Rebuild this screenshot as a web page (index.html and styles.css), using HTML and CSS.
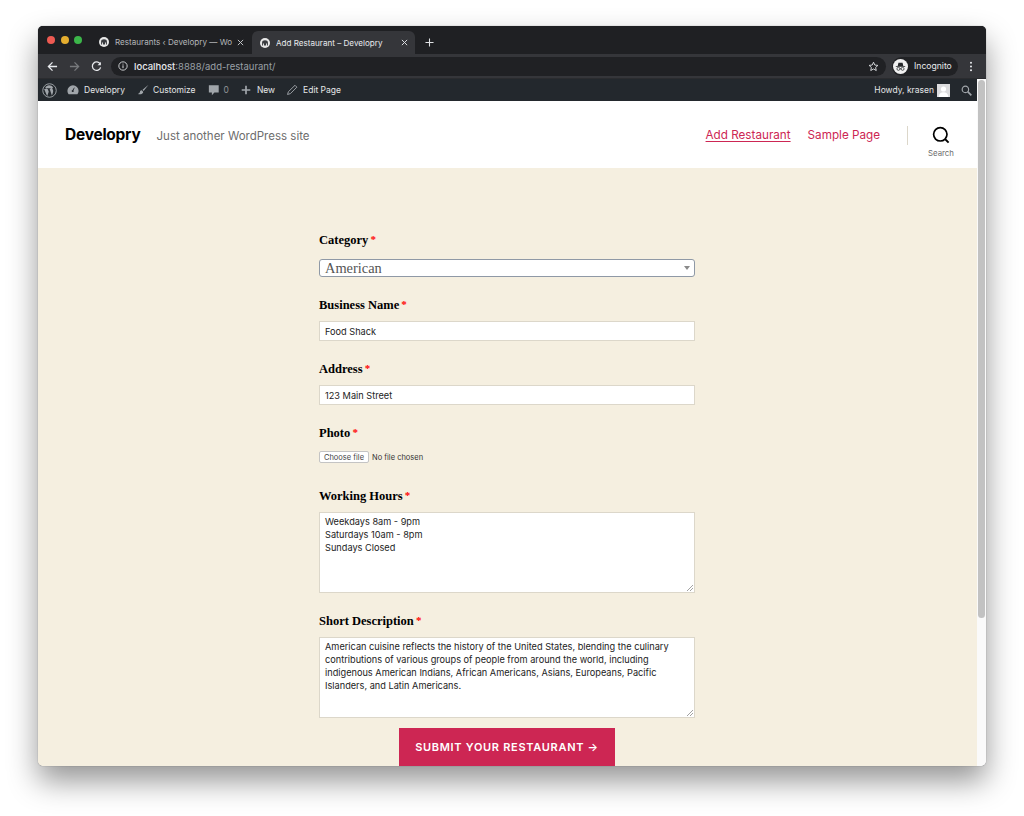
FILE: index.html
```html
<!DOCTYPE html>
<html lang="en">
<head>
<meta charset="utf-8">
<title>Add Restaurant – Developry</title>
<link rel="stylesheet" href="styles.css">
</head>
<body>
<div class="window">
  <div class="tabstrip">
    <div class="lights"><i class="light red"></i><i class="light yellow"></i><i class="light green"></i></div>
    <div class="tab">
      <svg class="favicon" viewBox="0 0 12 12"><circle cx="6" cy="6" r="6" fill="#e8e8e8"/><path d="M2.500 9V5.500C2.500 3.800 4 2.800 6 2.800s3.500 1 3.500 2.700V9H8.300V6.500H7.200V9H4.800V6.500H3.700V9z" fill="#3a3c40"/></svg>
      <span class="tab-title">Restaurants ‹ Developry — Wo</span>
      <svg class="tab-x" viewBox="0 0 8 8"><path d="M1 1l6 6M7 1L1 7" stroke="#c4c6c9" stroke-width="1.100"/></svg>
    </div>
    <div class="tab active">
      <svg class="favicon" viewBox="0 0 12 12"><circle cx="6" cy="6" r="6" fill="#e8e8e8"/><path d="M2.500 9V5.500C2.500 3.800 4 2.800 6 2.800s3.500 1 3.500 2.700V9H8.300V6.500H7.200V9H4.800V6.500H3.700V9z" fill="#3a3c40"/></svg>
      <span class="tab-title">Add Restaurant – Developry</span>
      <svg class="tab-x" viewBox="0 0 8 8"><path d="M1 1l6 6M7 1L1 7" stroke="#dfe1e4" stroke-width="1.100"/></svg>
    </div>
    <svg class="newtab" viewBox="0 0 10 10"><path d="M5 .5v9M.5 5h9" stroke="#dfe1e4" stroke-width="1.200"/></svg>
  </div>
  <div class="toolbar">
    <svg class="nav" viewBox="0 0 12 12"><path d="M11 6H1.500M6 1.500L1.500 6 6 10.500" fill="none" stroke="#e8eaed" stroke-width="1.400"/></svg>
    <svg class="nav" viewBox="0 0 12 12"><path d="M1 6h9.500M6 1.500L10.500 6 6 10.500" fill="none" stroke="#77797c" stroke-width="1.400"/></svg>
    <svg class="nav" viewBox="0 0 12 12"><path d="M10 3.200A4.600 4.600 0 1 0 10.500 7" fill="none" stroke="#e8eaed" stroke-width="1.400"/><path d="M10.800 .8v3.700H7.100z" fill="#e8eaed"/></svg>
    <div class="omnibox">
      <svg class="info" viewBox="0 0 12 12"><circle cx="6" cy="6" r="5" fill="none" stroke="#e8eaed" stroke-width="1"/><path d="M6 5.200v3.400M6 3.200v1.100" stroke="#e8eaed" stroke-width="1.100"/></svg>
      <span class="url"><b>localhost</b>:8888/add-restaurant/</span>
      <svg class="star" viewBox="0 0 12 12"><path d="M6 1.300l1.400 3.100 3.400.4-2.500 2.300.7 3.300L6 8.700l-3 1.700.7-3.300L1.200 4.800l3.400-.4z" fill="none" stroke="#dfe1e4" stroke-width="1"/></svg>
    </div>
    <div class="profile">
      <svg class="spy" viewBox="0 0 16 16"><circle cx="8" cy="8" r="8" fill="#f1f1f1"/><path d="M3 7.500h10v.8H3zM5 7.500l.8-3.500h4.400l.8 3.500z" fill="#26282b"/><circle cx="5.800" cy="10.500" r="1.600" fill="none" stroke="#26282b" stroke-width=".8"/><circle cx="10.200" cy="10.500" r="1.600" fill="none" stroke="#26282b" stroke-width=".8"/><path d="M7.300 10.400h1.400" stroke="#26282b" stroke-width=".7"/></svg>
      <span>Incognito</span>
    </div>
    <svg class="menu-dots" viewBox="0 0 4 12"><circle cx="2" cy="2" r="1.100" fill="#e8eaed"/><circle cx="2" cy="6" r="1.100" fill="#e8eaed"/><circle cx="2" cy="10" r="1.100" fill="#e8eaed"/></svg>
  </div>
  <div class="viewport">
    <div class="page">
      <div class="adminbar">
        <svg class="wp-logo" viewBox="0 0 16 16"><circle cx="8" cy="8" r="7.200" fill="none" stroke="#a0a5aa" stroke-width="1"/><path d="M2.300 6.300L5.500 14l1.700-4.700-1.100-3h-1v-.8h4v.8H8.200l2.400 7.400 1-3.300c.6-2 .2-3.100-.4-4-.4-.6-.1-1.500.8-1.500C9.600 1.600 5 1.700 3.300 5.500h1.300v.8z" fill="#a0a5aa"/></svg>
        <span class="ab-item ab-site"><svg class="ab-icon" viewBox="0 0 14 14"><path d="M7 1.500a6.500 6.500 0 0 0-6.500 6.500c0 1.700.6 3 1.400 4h10.200c.8-1 1.400-2.300 1.400-4A6.500 6.500 0 0 0 7 1.500zM6.500 7l1.800-3 .6.300L7.600 7.500a1.200 1.200 0 1 1-1.100-.5z" fill="#a0a5aa" fill-rule="evenodd"/></svg>Developry</span>
        <span class="ab-item ab-custom"><svg class="ab-icon" viewBox="0 0 14 14"><path d="M13.500 1L6.500 6.800l1.200 1.300zM5.600 7.400c-1.500 0-2 1-2.200 2-.2 1-.8 1.600-2.400 2.300 2.800.8 5.800.3 6.300-2.500z" fill="#a0a5aa"/></svg>Customize</span>
        <span class="ab-item ab-comments"><svg class="ab-icon" viewBox="0 0 14 14"><path d="M1 1.500h11.500v8.500H7.500L4.500 13v-3H1z" fill="#a0a5aa"/></svg><span class="ab-count">0</span></span>
        <span class="ab-item ab-new"><svg class="ab-icon" viewBox="0 0 14 14"><path d="M7 2v10M2 7h10" stroke="#a0a5aa" stroke-width="2"/></svg>New</span>
        <span class="ab-item"><svg class="ab-icon" viewBox="0 0 14 14"><path d="M10.500 1.500l2.200 2.200-7.500 7.500-3.400 1 1-3.200z" fill="none" stroke="#a0a5aa" stroke-width="1.100"/></svg>Edit Page</span>
        <span class="ab-right">Howdy, krasen<svg class="avatar" viewBox="0 0 12 12"><rect width="12" height="12" fill="#dcdcde"/><circle cx="6" cy="4.600" r="2.400" fill="#fff"/><path d="M1.500 12c.3-3 2.200-4.300 4.500-4.300S10.200 9 10.500 12z" fill="#fff"/></svg><svg class="ab-search" viewBox="0 0 12 12"><circle cx="4.800" cy="4.800" r="3.500" fill="none" stroke="#a0a5aa" stroke-width="1.300"/><path d="M7.300 7.300l4 4" stroke="#a0a5aa" stroke-width="1.800"/></svg></span>
      </div>
      <header class="site-header">
        <div class="site-title">Developry</div>
        <div class="site-desc">Just another WordPress site</div>
        <nav class="site-nav"><a class="current" href="#">Add Restaurant</a><a href="#">Sample Page</a></nav>
        <div class="search-toggle">
          <svg class="search-icon" viewBox="0 0 18 18"><circle cx="8.300" cy="8.300" r="6.700" fill="none" stroke="#000" stroke-width="1.700"/><path d="M13 13l3.600 3.600" stroke="#000" stroke-width="1.900"/></svg>
          <span>Search</span>
        </div>
      </header>
      <main class="content">
        <form class="form">
          <div class="field field-select">
            <label class="label">Category <em>*</em></label>
            <div class="select">American<svg class="caret" viewBox="0 0 6 4"><path d="M0 0h6L3 4z" fill="#8a8a8a"/></svg></div>
          </div>
          <div class="field">
            <label class="label">Business Name <em>*</em></label>
            <div class="input">Food Shack</div>
          </div>
          <div class="field">
            <label class="label">Address <em>*</em></label>
            <div class="input">123 Main Street</div>
          </div>
          <div class="field field-file">
            <label class="label">Photo <em>*</em></label>
            <div class="file"><span class="file-btn">Choose file</span><span>No file chosen</span></div>
          </div>
          <div class="field">
            <label class="label">Working Hours <em>*</em></label>
            <div class="textarea">Weekdays 8am - 9pm<br>Saturdays 10am - 8pm<br>Sundays Closed<svg class="grip" viewBox="0 0 7 7"><path d="M0 7l7-7M3.500 7L7 3.500" stroke="#777" stroke-width=".8"/></svg></div>
          </div>
          <div class="field field-last">
            <label class="label">Short Description <em>*</em></label>
            <div class="textarea">American cuisine reflects the history of the United States, blending the culinary contributions of various groups of people from around the world, including indigenous American Indians, African Americans, Asians, Europeans, Pacific Islanders, and Latin Americans.<svg class="grip" viewBox="0 0 7 7"><path d="M0 7l7-7M3.500 7L7 3.500" stroke="#777" stroke-width=".8"/></svg></div>
          </div>
          <div class="submit">SUBMIT YOUR RESTAURANT →</div>
        </form>
      </main>
    </div>
    <div class="scrollbar"><div class="thumb"></div></div>
  </div>
</div>
</body>
</html>
```

FILE: styles.css
```css
* { box-sizing: border-box; }
html, body { height: 100%; }
body {
  margin: 0;
  padding: 26px 38px 50px;
  background: #fff;
  font-family: Inter, "Liberation Sans", sans-serif;
  overflow: hidden;
}
.window {
  width: 948px;
  height: 740px;
  border-radius: 5px;
  overflow: hidden;
  display: flex;
  flex-direction: column;
  background: #202124;
  box-shadow: 0 15px 30px rgba(0,0,0,.42), 0 0 1px rgba(0,0,0,.5);
}
.tabstrip {
  height: 28px;
  flex: none;
  display: flex;
  align-items: flex-end;
  background: #1f2023;
  padding-left: 9px;
}
.lights { display: flex; gap: 5.500px; align-self: flex-start; margin-top: 10px; margin-right: 10px; }
.light { width: 8px; height: 8px; border-radius: 50%; display: block; }
.red { background: #ee5a52; }
.yellow { background: #e5ae2f; }
.green { background: #3cb64a; }
.tab {
  width: 160px;
  height: 22px;
  margin-bottom: 1px;
  display: flex;
  align-items: center;
  padding: 0 8px 0 7px;
  font-size: 8.100px;
  color: #b4b6b9;
  white-space: nowrap;
}
.tab.active {
  width: 163px;
  height: 23px;
  margin-bottom: 0;
  padding: 0 7px 0 8px;
  background: #35363a;
  color: #e8eaed;
  border-radius: 6px 6px 0 0;
}
.favicon { width: 10px; height: 10px; flex: none; margin-right: 6px; }
.tab-title { flex: 1; overflow: hidden; }
.tab-x { width: 7px; height: 7px; flex: none; margin-left: 4px; }
.newtab { width: 9px; height: 9px; margin: 0 0 7px 10px; flex: none; }
.toolbar {
  height: 25px;
  flex: none;
  display: flex;
  align-items: center;
  background: #35363a;
  padding: 0 9px;
  border-bottom: 1px solid #2b2c2f;
}
.nav { width: 11px; height: 11px; flex: none; margin-right: 11px; }
.nav:nth-child(3) { margin-right: 9px; }
.omnibox {
  width: 775px;
  height: 19px;
  flex: none;
  border-radius: 10px;
  background: #202124;
  display: flex;
  align-items: center;
  padding: 0 7px;
  font-size: 9.500px;
  color: #9aa0a6;
}
.info { width: 10px; height: 10px; flex: none; margin-right: 6px; }
.url { flex: 1; }
.url b { font-weight: 500; color: #e8eaed; }
.star { width: 11px; height: 11px; flex: none; }
.profile {
  width: 66px;
  height: 19px;
  flex: none;
  margin-left: 6px;
  border-radius: 10px;
  background: #202124;
  display: flex;
  align-items: center;
  gap: 6px;
  padding-left: 1px;
  font-size: 8.600px;
  color: #e8eaed;
}
.spy { width: 15px; height: 15px; flex: none; }
.menu-dots { width: 4px; height: 11px; flex: none; margin-left: 11px; }
.viewport { flex: 1; min-height: 0; display: flex; background: #fff; }
.page { flex: 1; min-width: 0; display: flex; flex-direction: column; overflow: hidden; }
.scrollbar { width: 9px; flex: none; background: #fafafa; padding: 1px 1px 0 1px; }
.thumb { width: 7px; height: 538px; background: #c2c2c2; border-radius: 4px; }
.adminbar {
  height: 22px;
  flex: none;
  display: flex;
  align-items: center;
  background: #23282d;
  color: #e4e6e7;
  font-size: 8.500px;
  padding-left: 4px;
  white-space: nowrap;
}
.wp-logo { width: 15px; height: 15px; flex: none; margin-right: 10px; }
.ab-item { display: flex; align-items: center; margin-right: 12px; }
.ab-icon { width: 12px; height: 12px; flex: none; margin-right: 5px; }
.ab-custom .ab-icon, .ab-comments .ab-icon { margin-right: 4px; }
.ab-comments, .ab-new { margin-right: 11px; }
.ab-count { color: #8f9498; }
.ab-right { margin-left: auto; display: flex; align-items: center; padding-right: 5px; }
.avatar { width: 13px; height: 13px; margin: 0 11px 0 3px; }
.ab-search { width: 11px; height: 11px; }
.site-header {
  height: 67px;
  flex: none;
  background: #fff;
  display: flex;
  align-items: center;
  padding: 0 10px 0 27px;
}
.site-title { font-size: 15.500px; font-weight: 700; color: #000; letter-spacing: -.25px; margin-right: 16px; }
.site-desc { font-size: 11.500px; color: #6d6d6d; padding-top: 2px; }
.site-nav { margin-left: auto; display: flex; gap: 17px; font-size: 11.700px; }
.site-nav a { color: #cd2653; text-decoration: none; }
.site-nav a.current { text-decoration: underline; text-underline-offset: 1.500px; }
.search-toggle {
  margin-left: 27px;
  padding-left: 8px;
  width: 60px;
  height: 46px;
  position: relative;
  display: flex;
  flex-direction: column;
  align-items: center;
  justify-content: flex-end;
  font-size: 7.800px;
  color: #6d6d6d;
  gap: 4px;
}
.search-toggle::before {
  content: "";
  position: absolute;
  left: 0;
  top: 14px;
  bottom: 13px;
  width: 1px;
  background: #dcd7ca;
}
.search-icon { width: 18px; height: 18px; }
.content { flex: 1; min-height: 0; background: #f5efe0; overflow: hidden; padding: 64px 0 0 281px; }
.form { width: 376px; display: flex; flex-direction: column; }
.field { display: flex; flex-direction: column; gap: 8px; margin-bottom: 20px; }
.field-select { gap: 11px; }
.field-file { gap: 10px; margin-bottom: 25px; }
.field-last { margin-bottom: 10px; }
.label {
  height: 16px;
  line-height: 16px;
  font-family: "Liberation Serif", serif;
  font-weight: 700;
  font-size: 12.500px;
  color: #000;
}
.label em { color: #f00; font-style: normal; font-weight: 700; font-size: 11px; margin-left: -1px; position: relative; top: -1px; }
.select {
  height: 18px;
  border: 1px solid #8f99a6;
  border-radius: 3px;
  background: #fff;
  font-family: "Liberation Serif", serif;
  font-size: 14.400px;
  line-height: 17px;
  color: #555;
  padding-left: 5px;
  position: relative;
}
.caret { position: absolute; right: 4px; top: 6px; width: 6px; height: 4px; }
.input {
  height: 20px;
  border: 1px solid #dcd7ca;
  background: #fff;
  font-size: 9.200px;
  line-height: 19px;
  color: #222;
  padding-left: 5px;
}
.file { display: flex; align-items: center; gap: 3px; height: 12px; font-size: 7.500px; color: #333; }
.file-btn {
  width: 50px;
  height: 12px;
  border: 1px solid #c4c4c4;
  border-radius: 2px;
  background: #fff;
  text-align: center;
  line-height: 11px;
  color: #444;
}
.textarea {
  height: 81px;
  border: 1px solid #dcd7ca;
  background: #fff;
  font-size: 9.200px;
  line-height: 13px;
  color: #222;
  padding: 2px 5px;
  position: relative;
}
.grip { position: absolute; right: 1px; bottom: 1px; width: 6px; height: 6px; }
.submit {
  width: 216px;
  height: 48px;
  flex: none;
  margin-left: 80px;
  background: #cd2653;
  color: #fff;
  font-size: 11px;
  font-weight: 600;
  letter-spacing: .7px;
  line-height: 39px;
  text-align: center;
}
```
